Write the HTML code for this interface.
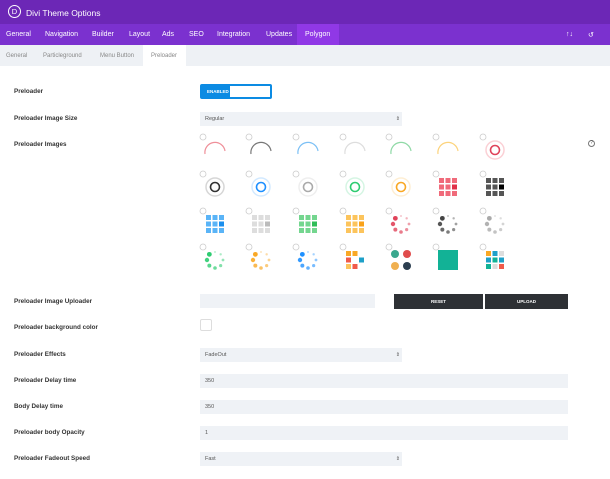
<!DOCTYPE html>
<html><head><meta charset="utf-8"><style>
*{margin:0;padding:0;box-sizing:border-box}
body{width:610px;height:479px;background:#fff;font-family:"Liberation Sans",sans-serif;position:relative;overflow:hidden}
.hdr{position:absolute;left:0;top:0;width:610px;height:24px;background:#6c27b6;color:#fff;font-size:8.5px}
.logo{position:absolute;left:8px;top:5px;width:13px;height:13px;border:1px solid #fff;border-radius:50%;font-size:7.5px;text-align:center;line-height:11px}
.nav{position:absolute;left:0;top:24px;width:610px;height:21px;background:#7b31cf;color:#fff;font-size:7px}
.nav span{position:absolute;top:7px}
.act{position:absolute;left:297px;top:0;width:42px;height:21px;background:#9038e6}
.sub{position:absolute;left:0;top:45px;width:610px;height:21px;background:#eef1f5;color:#888;font-size:6px}
.sub span{position:absolute;top:8px}
.subact{position:absolute;left:143px;top:0;width:43px;height:21px;background:#fff}
.lbl{position:absolute;left:14px;font-size:6.3px;font-weight:bold;color:#333}
.in{position:absolute;left:200px;height:14px;background:#eff2f6;font-size:5.5px;color:#555;padding-left:5px;line-height:14px}
.sel:after{content:"⇕";position:absolute;right:2px;top:0;font-size:5px}
.btn{position:absolute;top:294px;height:15px;background:#2e3135;color:#fff;font-size:4.5px;font-weight:bold;text-align:center;line-height:15px}
</style></head><body>
<div class="hdr"><div class="logo">D</div><span style="position:absolute;left:26px;top:8px">Divi Theme Options</span></div>
<div class="nav"><div class="act"></div>
<span style="left:6px">General</span><span style="left:45px">Navigation</span><span style="left:92px">Builder</span><span style="left:129px">Layout</span><span style="left:162px">Ads</span><span style="left:189px">SEO</span><span style="left:217px">Integration</span><span style="left:266px">Updates</span><span style="left:305px">Polygon</span>
<span style="left:566px">↑↓</span><span style="left:588px">↺</span></div>
<div class="sub"><div class="subact"></div>
<span style="left:6px">General</span><span style="left:43px">Particleground</span><span style="left:100px">Menu Button</span><span style="left:151px">Preloader</span></div>

<div class="lbl" style="top:88px">Preloader</div>
<div style="position:absolute;left:200px;top:84px;width:72px;height:15px;background:#0c8be3;border-radius:2px"><span style="position:absolute;left:7px;top:5px;font-size:4.5px;color:#fff;font-weight:bold">ENABLED</span><div style="position:absolute;left:30px;top:2px;width:40px;height:11px;background:#fff"></div></div>
<div class="lbl" style="top:115px">Preloader Image Size</div>
<div class="in sel" style="top:112px;width:202px">Regular</div>
<div class="lbl" style="top:141px">Preloader Images</div>
<div style="position:absolute;left:588px;top:140px;width:7px;height:7px;border:1px solid #777;border-radius:50%;font-size:5px;text-align:center;line-height:5px;color:#555">?</div>
<svg id="g" style="position:absolute;left:0;top:0" width="610" height="280"></svg>

<div class="lbl" style="top:298px">Preloader Image Uploader</div>
<div class="in" style="top:294px;width:175px"></div>
<div class="btn" style="left:394px;width:89px">RESET</div>
<div class="btn" style="left:485px;width:83px">UPLOAD</div>
<div class="lbl" style="top:324px">Preloader background color</div>
<div style="position:absolute;left:200px;top:319px;width:12px;height:12px;border:1px solid #ddd;border-radius:2px"></div>
<div class="lbl" style="top:351px">Preloader Effects</div>
<div class="in sel" style="top:348px;width:202px">FadeOut</div>
<div class="lbl" style="top:377px">Preloader Delay time</div>
<div class="in" style="top:374px;width:368px">350</div>
<div class="lbl" style="top:403px">Body Delay time</div>
<div class="in" style="top:400px;width:368px">350</div>
<div class="lbl" style="top:429px">Preloader body Opacity</div>
<div class="in" style="top:426px;width:368px">1</div>
<div class="lbl" style="top:455px">Preloader Fadeout Speed</div>
<div class="in sel" style="top:452px;width:202px">Fast</div>
<script>
var xs=[203,249,296,343,389,436,483],ys=[137,174,211,247],s='';
var ac=['#ef8f99','#777','#7cc0f5','#ddd','#8fd9a6','#fcd37c'];
var rc=['#333','#1e90ff','#aaa','#2ecc71','#f9a825'];
function sq(x,y,c,hi){var o='';for(var i=0;i<3;i++)for(var j=0;j<3;j++){var col=(i==1&&j==2)?hi:c;o+='<rect x="'+(x-9+j*6.5)+'" y="'+(y-9+i*6.5)+'" width="5" height="5" fill="'+col+'"/>';}return o;}
function dots(x,y,c){var o='';for(var k=0;k<8;k++){var a=k*Math.PI/4-Math.PI/2;o+='<circle cx="'+(x+8*Math.cos(a))+'" cy="'+(y+8*Math.sin(a))+'" r="'+(1+k*0.2)+'" fill="'+c+'" opacity="'+(0.3+k*0.1)+'"/>';}return o;}
for(var r=0;r<4;r++)for(var c=0;c<7;c++){var x=xs[c],y=ys[r],cx=x+12,cy=y+13;
s+='<circle cx="'+x+'" cy="'+y+'" r="3" fill="#fff" stroke="#ccc" stroke-width="0.8"/>';
if(r==0){if(c<6)s+='<path d="M'+(cx-10)+' '+(cy+4)+' A10 10 0 0 1 '+(cx+10)+' '+(cy+1)+'" fill="none" stroke="'+ac[c]+'" stroke-width="1.2"/>';else s+='<circle cx="'+cx+'" cy="'+cy+'" r="9" fill="none" stroke="#fbd0d5" stroke-width="1.5"/><circle cx="'+cx+'" cy="'+cy+'" r="4.5" fill="none" stroke="#e0435a" stroke-width="1.6"/>';}
if(r==1){if(c<5)s+='<circle cx="'+cx+'" cy="'+cy+'" r="9" fill="none" stroke="'+rc[c]+'" stroke-opacity="0.2" stroke-width="1.5"/><circle cx="'+cx+'" cy="'+cy+'" r="4.5" fill="none" stroke="'+rc[c]+'" stroke-width="1.6"/>';else s+=sq(cx,cy,c==5?'#f06a7a':'#555',c==5?'#e03048':'#000');}
if(r==2){var cols=[['#5ab4f7','#1b8fee'],['#ddd','#bbb'],['#74d68f','#2ebd57'],['#fcc45c','#f9a21a']];if(c<4)s+=sq(cx,cy,cols[c][0],cols[c][1]);else s+=dots(cx,cy,['#e0435a','#444','#aaa'][c-4]);}
if(r==3){if(c<3)s+=dots(cx,cy,['#2ecc71','#f9a825','#1e90ff'][c]);
else if(c==3)s+='<rect x="'+(cx-9)+'" y="'+(cy-9)+'" width="5" height="5" fill="#f9a825"/><rect x="'+(cx-2.5)+'" y="'+(cy-9)+'" width="5" height="5" fill="#f9a825"/><rect x="'+(cx-9)+'" y="'+(cy-2.5)+'" width="5" height="5" fill="#f05a4a"/><rect x="'+(cx+4)+'" y="'+(cy-2.5)+'" width="5" height="5" fill="#1ea0c8"/><rect x="'+(cx-9)+'" y="'+(cy+4)+'" width="5" height="5" fill="#fcc45c"/><rect x="'+(cx-2.5)+'" y="'+(cy+4)+'" width="5" height="5" fill="#f05a4a"/>';
else if(c==4)s+='<circle cx="'+(cx-6)+'" cy="'+(cy-6)+'" r="4" fill="#3aa88e"/><circle cx="'+(cx+6)+'" cy="'+(cy-6)+'" r="4" fill="#e04c4c"/><circle cx="'+(cx-6)+'" cy="'+(cy+6)+'" r="4" fill="#f0b050"/><circle cx="'+(cx+6)+'" cy="'+(cy+6)+'" r="4" fill="#2c3e50"/>';
else if(c==5)s+='<rect x="'+(cx-10)+'" y="'+(cy-10)+'" width="20" height="20" fill="#12b296"/>';
else{var cl=['#f9a825','#1ea0c8','#ddd','#1ea0c8','#12b296','#1ea0c8','#12b296','#ddd','#f05a4a'];for(var k=0;k<9;k++)s+='<rect x="'+(cx-9+(k%3)*6.5)+'" y="'+(cy-9+Math.floor(k/3)*6.5)+'" width="5" height="5" fill="'+cl[k]+'"/>';}}
}
document.getElementById('g').innerHTML=s;
</script>
</body></html>
